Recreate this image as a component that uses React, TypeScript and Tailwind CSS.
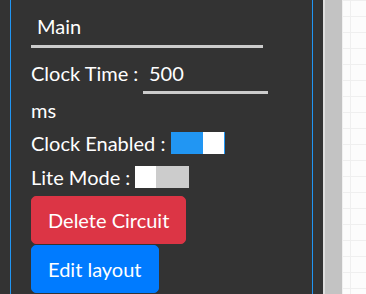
import React from 'react';

function Toggle({ on }: { on: boolean }) {
  return (
    <span className={`flex h-[22px] w-[54px] shrink-0 ${on ? 'justify-end bg-[#2196f3] pr-[1px]' : 'justify-start bg-[#cccccc]'}`}>
      <span className="h-[22px] w-[21px] bg-white" />
    </span>
  );
}

export default function App() {
  return (
    <div className="flex h-[294px] w-[366px] overflow-hidden font-['Lato',sans-serif] text-[20px] text-white">
      {/* sidebar */}
      <div className="h-full w-[323px] shrink-0 bg-[#333333] pl-[10px]">
        <div className="flex h-full w-[303px] flex-col items-start border-x border-[#2196f3] pt-[11px] pl-[20px]">
          <input
            readOnly
            value="Main"
            className="block h-[37px] w-[232px] border-b-[3px] border-[#cccccc] bg-transparent pb-[5px] pl-[6px] text-white outline-none"
          />

          <div className="mt-[12px] flex items-baseline">
            <span className="w-[112px] shrink-0 whitespace-nowrap leading-[20px]">Clock Time :</span>
            <input
              readOnly
              value="500"
              className="h-[34px] w-[125px] border-b-[3px] border-[#cccccc] bg-transparent pb-[6px] pl-[6px] text-white outline-none"
            />
          </div>

          <div className="flex h-[32px] items-center leading-[30px]">ms</div>

          <div className="flex h-[34px] items-center leading-[30px]">
            <span className="w-[140px] shrink-0 whitespace-nowrap">Clock Enabled :</span>
            <Toggle on />
          </div>

          <div className="flex h-[34px] items-center leading-[30px]">
            <span className="w-[104px] shrink-0 whitespace-nowrap">Lite Mode :</span>
            <Toggle on={false} />
          </div>

          <button className="mt-[2px] block h-[48px] rounded-[5px] border border-[#dc3545] bg-[#dc3545] px-[16px] leading-[30px] text-white">
            Delete Circuit
          </button>
          <button className="mt-[1px] block h-[48px] rounded-[5px] border border-[#007bff] bg-[#007bff] px-[16px] leading-[30px] text-white">
            Edit layout
          </button>
        </div>
      </div>

      {/* splitter + scroll track */}
      <div className="h-full w-[2px] shrink-0 bg-[#dedede]" />
      <div className="h-full w-[17px] shrink-0 bg-[#c3c3c3]" />

      {/* grid canvas */}
      <div className="h-full flex-1 border-l border-[#f0f0f0] bg-[#fcfcfc] bg-[linear-gradient(#efefef_1px,transparent_1px),linear-gradient(90deg,#efefef_1px,transparent_1px)] bg-size-[16px_16px] bg-position-[7px_0px]" />
    </div>
  );
}
